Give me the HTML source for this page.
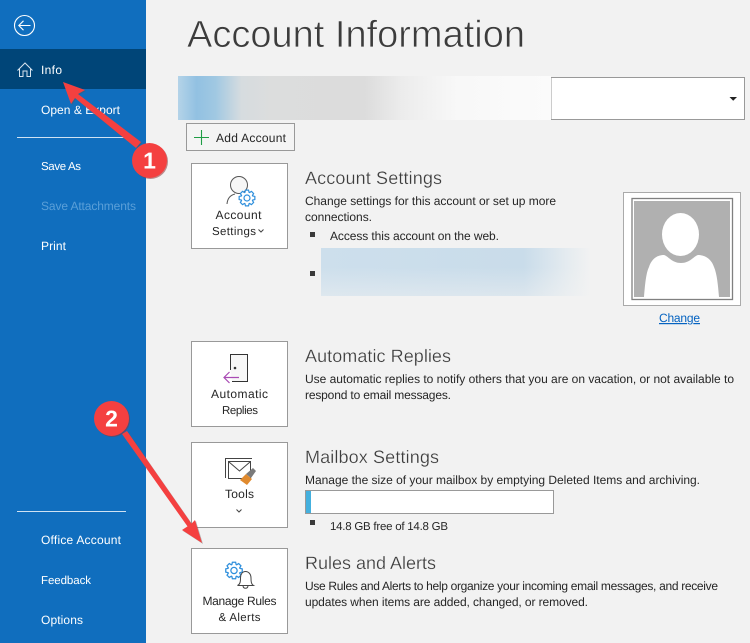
<!DOCTYPE html>
<html><head><meta charset="utf-8"><style>
html,body{margin:0;padding:0;background:#f2f2f2;width:750px;height:643px;overflow:hidden}
svg{display:block}
text{font-family:"Liberation Sans",sans-serif;font-size:12px;fill:#262626;text-rendering:geometricPrecision}
.n{fill:#fff}
.h{font-size:18px;fill:#3c3c3c;stroke:#f2f2f2;stroke-width:.25px}
.s{font-size:11.5px}
.t{font-size:11px}
</style></head><body>
<svg width="750" height="643" viewBox="0 0 750 643" xmlns="http://www.w3.org/2000/svg">
<defs>
<linearGradient id="g1" x1="0" x2="1" y1="0" y2="0">
<stop offset="0" stop-color="#b4d3e8"/><stop offset=".05" stop-color="#92c1e2"/><stop offset=".1" stop-color="#a0c8e2"/><stop offset=".17" stop-color="#d6dcdf"/><stop offset=".25" stop-color="#dcdddd"/><stop offset=".5" stop-color="#dcdcdc"/><stop offset=".6" stop-color="#ececec"/><stop offset=".75" stop-color="#f8f8f8"/><stop offset="1" stop-color="#fbfbfb"/>
</linearGradient>
<linearGradient id="g2" x1="0" x2="1" y1="0" y2="0">
<stop offset="0" stop-color="#cddfec"/><stop offset=".75" stop-color="#c9dcea"/><stop offset=".92" stop-color="#e6ecf0"/><stop offset="1" stop-color="#f2f2f2"/>
</linearGradient>
<linearGradient id="g3" x1="0" x2="0" y1="0" y2="1">
<stop offset="0" stop-color="#f2f2f2" stop-opacity="0"/><stop offset=".4" stop-color="#f2f2f2" stop-opacity="0"/><stop offset="1" stop-color="#f2f2f2" stop-opacity=".45"/>
</linearGradient>
<g id="gear">
<path d="M5.64 -2.05L7.85 -1.53V1.53L5.64 2.05L5.44 2.54L6.63 4.47L4.47 6.63L2.54 5.44L2.05 5.64L1.53 7.85H-1.53L-2.05 5.64L-2.54 5.44L-4.47 6.63L-6.63 4.47L-5.44 2.54L-5.64 2.05L-7.85 1.53V-1.53L-5.64 -2.05L-5.44 -2.54L-6.63 -4.47L-4.47 -6.63L-2.54 -5.44L-2.05 -5.64L-1.53 -7.85H1.53L2.05 -5.64L2.54 -5.44L4.47 -6.63L6.63 -4.47L5.44 -2.54Z" fill="#fff" stroke="#2f8fdc" stroke-width="1.200"/>
<circle r="3" fill="#fff" stroke="#2f8fdc" stroke-width="1.200"/>
</g>
</defs>
<!-- sidebar -->
<rect x="0" y="0" width="146" height="643" fill="#106ebe"/>
<rect x="0" y="49" width="146" height="40" fill="#004578"/>
<circle cx="24.500" cy="25.500" r="10" fill="none" stroke="#fff" stroke-width="1.100"/>
<path d="M30.500 25.500H19M23.500 20.800L18.800 25.500L23.500 30.200" fill="none" stroke="#fff" stroke-width="1.100"/>
<path d="M17.500 70.500L25 63L32.500 70.500M19.500 69V76.500H23V71H27V76.500H30.500V69" fill="none" stroke="#d8e4ee" stroke-width="1"/>
<text class="n" x="41" y="74" textLength="21">Info</text>
<text class="n" x="41" y="114" textLength="79">Open &amp; Export</text>
<rect x="17" y="137" width="109" height="1" fill="#cfe2f3"/>
<text class="n s" x="41" y="170" textLength="40">Save As</text>
<text x="41" y="210" textLength="95" style="fill:#5a9fd8">Save Attachments</text>
<text class="n" x="41" y="250" textLength="25">Print</text>
<rect x="17" y="511" width="109" height="1" fill="#cfe2f3"/>
<text class="n" x="41" y="544" textLength="80">Office Account</text>
<text class="n s" x="41" y="584" textLength="50">Feedback</text>
<text class="n" x="41" y="624" textLength="42">Options</text>
<!-- title -->
<text x="187" y="47" textLength="338" style="font-size:38px;fill:#3c3c3c;stroke:#f2f2f2;stroke-width:.7px">Account Information</text>
<!-- account dropdown -->
<rect x="551" y="77.500" width="193.500" height="42" fill="#fff" stroke="#999" stroke-width="1"/>
<rect x="178" y="76" width="373" height="44" fill="url(#g1)"/>
<path d="M729.500 97H737L733.200 100.800Z" fill="#222"/>
<!-- add account -->
<rect x="186.500" y="123.500" width="108" height="27" fill="#f4f4f4" stroke="#999"/>
<path d="M201.500 130V145M194 137.500H209" stroke="#1f9d45" stroke-width="1.100" fill="none"/>
<text x="216" y="142" textLength="70">Add Account</text>
<!-- buttons -->
<rect x="191.500" y="163.500" width="96" height="85" fill="#fff" stroke="#999"/>
<rect x="191.500" y="341.500" width="96" height="85" fill="#fff" stroke="#999"/>
<rect x="191.500" y="442.500" width="96" height="85" fill="#fff" stroke="#999"/>
<rect x="191.500" y="548.500" width="96" height="85" fill="#fff" stroke="#999"/>
<!-- account settings icon -->
<circle cx="239" cy="185" r="8.500" fill="#f6f6f6" stroke="#555" stroke-width="1"/>
<path d="M227 204C227.500 198 231 195 235 194" fill="none" stroke="#555"/>
<use href="#gear" transform="translate(247 198)"/>
<text x="215.500" y="219" textLength="46">Account</text>
<text class="s" x="212" y="235" textLength="44">Settings</text>
<path d="M258.500 229.500L261 232L263.500 229.500" fill="none" stroke="#444"/>
<!-- automatic replies icon -->
<path d="M230.500 370V354.500H247.500V381.500H232" fill="#f7f7f7" stroke="#333"/>
<circle cx="235" cy="368" r="1.300" fill="#333"/>
<path d="M239 377.500H224M229.500 372L224 377.500L229.500 383" fill="none" stroke="#a94bb4" stroke-width="1.200"/>
<text x="211" y="398" textLength="57">Automatic</text>
<text class="s" x="222" y="414" textLength="36">Replies</text>
<!-- tools icon -->
<path d="M225.500 478V458.500H252" fill="none" stroke="#444"/>
<rect x="228.500" y="461.500" width="22" height="17" fill="#fff" stroke="#444"/>
<path d="M229 462L239.500 471L250 462" fill="none" stroke="#444"/>
<path d="M240 480L246 474L252 479L247 485Z" fill="#e08a2e"/>
<path d="M246 474L253 468L256 471L251 478Z" fill="#7a7a7a"/>
<text x="225" y="498" textLength="29">Tools</text>
<path d="M236.500 509.500L239 512L241.500 509.500" fill="none" stroke="#444"/>
<!-- rules icon -->
<use href="#gear" transform="translate(234 570.500) scale(1.050)"/>
<path d="M237.500 585.500C240.500 584 240.500 581 240.500 578C240.500 574 242.500 571.500 245.500 571.500C248.500 571.500 251 574 251 578C251 581 251 584 253.500 585.500Z" fill="#fff" stroke="#444"/>
<path d="M243 586C243.500 589 247.500 589 248 586" fill="none" stroke="#444"/>
<text x="202.500" y="605" textLength="74">Manage Rules</text>
<text class="s" x="218.500" y="621" textLength="42">&amp; Alerts</text>
<!-- account settings text -->
<text class="h" x="305" y="184" textLength="137">Account Settings</text>
<text x="305" y="205" textLength="251">Change settings for this account or set up more</text>
<text x="305" y="221" textLength="67">connections.</text>
<rect x="310" y="232" width="5" height="5" fill="#3a3a3a"/>
<text x="330" y="240" textLength="169">Access this account on the web.</text>
<rect x="321" y="248" width="270" height="48" fill="url(#g2)"/>
<rect x="321" y="248" width="270" height="48" fill="url(#g3)"/>
<rect x="310" y="271" width="5" height="5" fill="#3a3a3a"/>
<!-- photo -->
<rect x="623.500" y="192.500" width="117" height="113" fill="#fff" stroke="#aaa"/>
<rect x="632" y="198.500" width="100.500" height="101" fill="#fff" stroke="#808080" stroke-width="1.300"/>
<rect x="634" y="201" width="96" height="96" fill="#b0b0b0"/>
<ellipse cx="680.500" cy="234.500" rx="18.500" ry="21.500" fill="#fff"/>
<path d="M644 297C645 285 646 273 649 267C652 258 658 255 664 255C668 256 672 263 681 263C690 263 694 256 698 255C704 255 711 258 714 267C717 274 718 285 719 297Z" fill="#fff"/>
<text x="659" y="322" textLength="41" style="fill:#0563c1;text-decoration:underline">Change</text>
<!-- automatic replies text -->
<text class="h" x="305" y="362" textLength="146">Automatic Replies</text>
<text x="305" y="383" textLength="429">Use automatic replies to notify others that you are on vacation, or not available to</text>
<text x="305" y="399" textLength="146">respond to email messages.</text>
<!-- mailbox text -->
<text class="h" x="305" y="463" textLength="134">Mailbox Settings</text>
<text x="305" y="484" textLength="395">Manage the size of your mailbox by emptying Deleted Items and archiving.</text>
<rect x="305.500" y="490.500" width="248" height="23" fill="#fff" stroke="#999"/>
<rect x="306" y="491" width="5" height="22" fill="#44b0de"/>
<rect x="310" y="520" width="5" height="5" fill="#3a3a3a"/>
<text class="s" x="330" y="530" textLength="118">14.8 GB free of 14.8 GB</text>
<!-- rules text -->
<text class="h" x="305" y="569" textLength="131">Rules and Alerts</text>
<text x="305" y="590" textLength="413">Use Rules and Alerts to help organize your incoming email messages, and receive</text>
<text x="305" y="606" textLength="283">updates when items are added, changed, or removed.</text>
<!-- arrows -->
<g fill="#555" opacity=".4" transform="translate(1 1)">
<path d="M63 82L85 90L78 94L141 142L136 148L75 98L71 104Z"/>
<path d="M202 543L182 530L187.500 526.400L122 434L127 431L191.500 523.600L195 520Z"/>
</g>
<path d="M63 82L85 90L78 94L141 142L136 148L75 98L71 104Z" fill="#f44040"/>
<path d="M202 543L182 530L187.500 526.400L122 434L127 431L191.500 523.600L195 520Z" fill="#f44040"/>
<circle cx="150.500" cy="161.500" r="17.500" fill="#8f3535" opacity=".55"/>
<circle cx="149.500" cy="160.500" r="17.500" fill="#f44040"/>
<circle cx="112.500" cy="419.500" r="17.500" fill="#8f3535" opacity=".55"/>
<circle cx="111.500" cy="418.500" r="17.500" fill="#f44040"/>
<text x="149.500" y="168.500" text-anchor="middle" style="font-size:23px;font-weight:bold;fill:#fff">1</text>
<text x="111.500" y="426.500" text-anchor="middle" style="font-size:23px;font-weight:bold;fill:#fff">2</text>
</svg>
</body></html>
